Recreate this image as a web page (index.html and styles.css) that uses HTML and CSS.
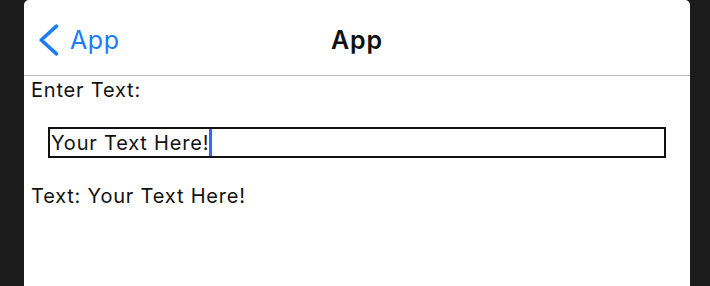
FILE: index.html
```html
<!DOCTYPE html>
<html>
<head>
<meta charset="utf-8">
<link rel="stylesheet" href="styles.css">
</head>
<body>
<div class="screen">
  <div class="panel">
    <header class="navbar">
      <div class="back">
        <svg class="chevron" width="20" height="32" viewBox="0 0 20 32"><path d="M17.5 2.2 L2.2 16 L17.5 29.8" fill="none" stroke="#1a7cf7" stroke-width="3.6" stroke-linecap="round" stroke-linejoin="round"/></svg>
        <span class="back-label">App</span>
      </div>
      <div class="title">App</div>
      <div class="spacer"></div>
    </header>
    <main class="content">
      <div class="label">Enter Text:</div>
      <div class="field"><span class="field-text">Your Text Here!</span><span class="caret"></span></div>
      <div class="output">Text: Your Text Here!</div>
    </main>
  </div>
</div>
</body>
</html>
```
FILE: styles.css
```css
html, body {
  margin: 0;
  padding: 0;
  background: #1b1b1b;
  height: 100%;
  overflow: hidden;
}
.screen {
  display: flex;
  height: 286px;
  padding: 0 20px 0 24px;
}
.panel {
  flex: 1;
  background: #ffffff;
  border-radius: 5px 5px 0 0;
  font-family: "Inter", "Liberation Sans", sans-serif;
  color: #111;
}
.navbar {
  height: 76px;
  border-bottom: 1px solid #b8b8b8;
  display: grid;
  grid-template-columns: 1fr auto 1fr;
  align-items: start;
  box-sizing: border-box;
  padding-top: 24px;
}
.back {
  display: flex;
  align-items: flex-start;
  padding-left: 15px;
  gap: 11px;
  color: #1a7cf7;
  font-size: 25px;
  line-height: 30px;
}
.chevron { display: block; }
.back-label {
  margin-top: 1px;
  letter-spacing: 0.6px;
}
.title {
  font-size: 25px;
  line-height: 30px;
  font-weight: 600;
  margin-top: 1px;
  letter-spacing: 0.8px;
}
.content {
  padding: 2px 0 0 7px;
  font-size: 20px;
  letter-spacing: 0.8px;
}
.label { line-height: 24px; }
.field {
  margin: 25px 24px 0 17px;
  border: 2px solid #111;
  height: 31px;
  box-sizing: border-box;
  display: flex;
  align-items: center;
  padding-left: 1px;
}
.field-text { line-height: 24px; }
.caret {
  width: 3px;
  height: 27px;
  background: #2f6bf5;
}
.output {
  margin-top: 26px;
  line-height: 24px;
}
```
